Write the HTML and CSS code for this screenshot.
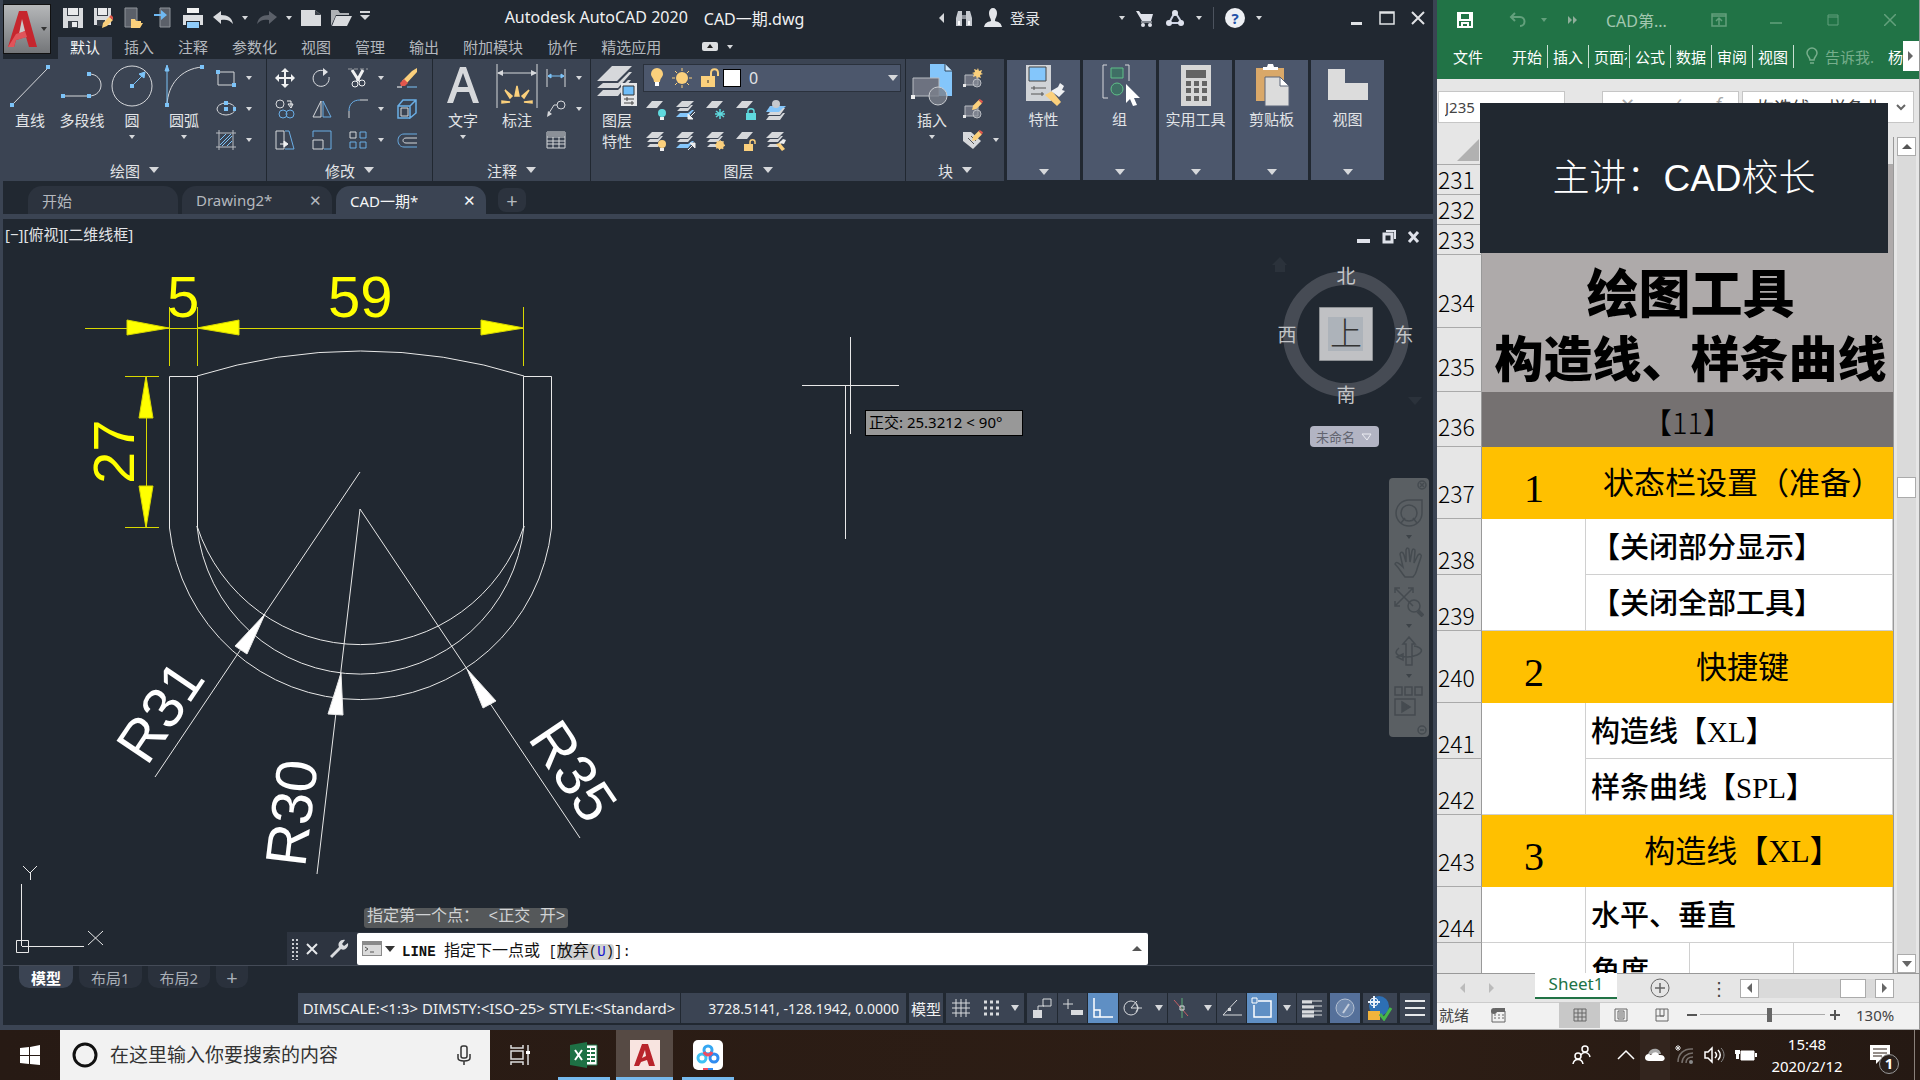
FILE: index.html
```html
<!DOCTYPE html>
<html lang="zh-CN">
<head>
    <meta charset="UTF-8">
    <meta name="viewport" content="width=device-width, initial-scale=1.0">
    <title>Autodesk AutoCAD 2020 CAD一期.dwg</title>
    <link rel="stylesheet" href="styles.css">
</head>
<body>
    <!-- shared icon parts -->
    <svg class="sprite" aria-hidden="true">
        <symbol id="sheet" viewBox="0 0 20 20"><path d="M6 1h11l-6 7H0z" fill="#d6d8db"/></symbol>
        <symbol id="stack" viewBox="0 0 20 20">
            <path d="M6 1h12l-6 6H0z" fill="#d6d8db"/>
            <path d="M1 11l3-3h8l3-3h2l-5 6zM1 16l3-3h8l3-3h2l-5 6z" fill="#d6d8db"/>
        </symbol>
        <symbol id="stack-blue" viewBox="0 0 20 20">
            <path d="M6 1h12l-6 6H0z" fill="#d6d8db"/>
            <path d="M1 11l3-3h8l3-3h2l-5 6z" fill="#d6d8db"/>
            <path d="M0 17l4-4h8l4-3h2l-6 7z" fill="#84c6fb"/>
        </symbol>
        <symbol id="block" viewBox="0 0 20 20">
            <path d="M2 7h13v10H2z" fill="#6d7280" stroke="#b9bcc2"/>
            <circle cx="14" cy="15" r="4" fill="#8b8f99" fill-opacity=".6" stroke="#b9bcc2"/>
            <path d="M0 16h3v3H0z" fill="#e8e8e8"/>
        </symbol>
        <symbol id="pencil" viewBox="0 0 10 10"><path d="M0 10l1-4 5-5 3 3-5 5z" fill="#fbd07c"/><path d="M6 1l1-1 3 2-1 2z" fill="#e2574c"/></symbol>
    </svg>

    <div class="desktop">
        <main class="cad">
            <header class="cad-head">
                <button class="app-button" aria-label="应用程序菜单">
                    <svg width="30" height="38" viewBox="0 0 30 38"><path d="M0 37L11 1h8l10 36h-8l-3-10-10 3-2 7z" fill="#c6262e"/><path d="M14 9l3 12-6 3z" fill="#c9c9c9"/><path d="M0 37l8-13 9-3 2 6-11 3-2 7z" fill="#e0545a"/></svg>
                    <span class="caret dark"></span>
                </button>
                <div class="cad-head-rows">
                    <div class="title-bar">
                        <div class="quick">
                            <button aria-label="保存"><svg width="20" height="22" viewBox="0 0 20 22"><path d="M0 1h20v20H0z" fill="#d9dbde"/><path d="M4 1h12v8H4zM5 14h10v7H5z" fill="#3a4049"/><path d="M5 1h10v7H5zM9 15h5v5H9z" fill="#e9eaec"/></svg></button>
                            <button aria-label="另存为"><svg width="20" height="22" viewBox="0 0 20 22"><path d="M1 1h17v17H1z" fill="#d9dbde"/><path d="M4 1h11v8H4zM4 13h8v6H4z" fill="#3a4049"/><path d="M5 1h9v7H5z" fill="#e9eaec"/><path d="M9 21l1-5 6-6 4 3-6 6z" fill="#fbd07c"/><path d="M16 10l2-2 3 3-1 2z" fill="#e2574c"/></svg></button>
                            <button aria-label="打开"><svg width="20" height="22" viewBox="0 0 20 22"><path d="M2 1h12v19H2z" fill="#5b6069" stroke="#90949b"/><path d="M8 20v-8h4l1 2h5v2h2l-3 5H8z" fill="#fbd07c"/></svg></button>
                            <button aria-label="保存到移动设备"><svg width="20" height="22" viewBox="0 0 20 22"><path d="M7 1h10v19H7z" fill="#5b6069" stroke="#90949b"/><path d="M1 7h7V3l6 5-6 5V9H1z" fill="#6fb9f2"/></svg></button>
                            <button aria-label="打印"><svg width="22" height="22" viewBox="0 0 22 22"><path d="M5 1h12v5H5z" fill="#f2f2f2"/><path d="M1 8h20v10h-3v-4H4v4H1z" fill="#dcdee1"/><path d="M5 15h12v6H5z" fill="#8fccfb"/></svg></button>
                            <button aria-label="放弃"><svg width="20" height="14" viewBox="0 0 20 14"><path d="M0 6l8-6v4c7 0 11 3 12 9-3-4-7-5-12-4v4z" fill="#d9dbde"/></svg></button>
                            <span class="caret"></span>
                            <button aria-label="重做"><svg width="20" height="14" viewBox="0 0 20 14"><path d="M20 6l-8-6v4C5 4 1 7 0 13c3-4 7-5 12-4v4z" fill="#5b6069"/></svg></button>
                            <span class="caret"></span>
                            <button aria-label="新建"><svg width="20" height="18" viewBox="0 0 20 18"><path d="M0 1h14l6 5v11H0z" fill="#d9dbde"/><path d="M14 1v5h6z" fill="#3a4049"/></svg></button>
                            <button aria-label="打开文件"><svg width="21" height="18" viewBox="0 0 21 18"><path d="M0 17V1h7l2 3h9v2H5z" fill="#aeb1b5"/><path d="M5 7h16l-5 10H1z" fill="#d9dbde"/></svg></button>
                            <span class="caret lined"></span>
                        </div>
                        <div class="app-title"><span>Autodesk AutoCAD 2020</span><span>CAD一期.dwg</span></div>
                        <div class="account">
                            <span class="caret left"></span>
                            <button aria-label="搜索"><svg width="18" height="18" viewBox="0 0 18 18"><path d="M1 17V9l2-7h4v15zM17 17V9l-2-7h-4v15z" fill="#c6cad0"/><path d="M7 6h4v4H7z" fill="#8b9098"/><path d="M3 12h2v4H3zM13 12h2v4h-2z" fill="#fff"/></svg></button>
                            <button class="login"><svg width="18" height="20" viewBox="0 0 18 20"><path d="M5 5a4 5 0 0 1 8 0c0 4-2 5-2 8 4 1 6 2 7 6H0c1-4 3-5 7-6 0-3-2-4-2-8z" fill="#e4e6ea"/></svg>登录</button>
                            <span class="caret login-caret"></span>
                            <button aria-label="购物车"><svg width="18" height="18" viewBox="0 0 18 18"><path d="M0 2h3l2 3h12l-2 7H6z" fill="#dfe2ea"/><path d="M5 13h11" stroke="#dfe2ea"/><circle cx="7" cy="16" r="2" fill="#dfe2ea"/><circle cx="14" cy="16" r="2" fill="#dfe2ea"/></svg></button>
                            <button aria-label="应用商店"><svg width="20" height="18" viewBox="0 0 20 18"><path d="M10 3L4 14h13z" fill="none" stroke="#cdd3e4" stroke-width="2"/><circle cx="10" cy="4" r="3" fill="#dfe3ee"/><circle cx="4" cy="14" r="3" fill="#dfe3ee"/><circle cx="16" cy="14" r="3" fill="#dfe3ee"/></svg></button>
                            <span class="caret"></span>
                            <span class="divider"></span>
                            <button class="help" aria-label="帮助">?</button>
                            <span class="caret"></span>
                        </div>
                        <div class="win-controls">
                            <button aria-label="最小化"><svg width="16" height="16" viewBox="0 0 16 16"><path d="M3 12h11v3H3z" fill="#e0e2e5"/></svg></button>
                            <button aria-label="最大化"><svg width="16" height="16" viewBox="0 0 16 16"><path d="M1 2h14v12H1zM1 3h14" fill="none" stroke="#e0e2e5" stroke-width="1.5"/></svg></button>
                            <button aria-label="关闭"><svg width="16" height="16" viewBox="0 0 16 16"><path d="M2 2l12 12M14 2L2 14" stroke="#e0e2e5" stroke-width="2"/></svg></button>
                        </div>
                    </div>
                    <nav class="ribbon-tabs">
                        <button class="active">默认</button><button>插入</button><button>注释</button><button>参数化</button><button>视图</button><button>管理</button><button>输出</button><button>附加模块</button><button>协作</button><button>精选应用</button>
                        <button class="ribbon-toggle" aria-label="最小化功能区"><svg width="18" height="11" viewBox="0 0 18 11"><rect x="1" y="1" width="16" height="9" rx="2" fill="#dcdee1"/><path d="M9 3l3 4H6z" fill="#222"/></svg><span class="caret"></span></button>
                    </nav>
                </div>
            </header>

            <section class="ribbon">
                <div class="panel draw">
                    <div class="panel-body">
                        <button class="big"><svg width="42" height="44" viewBox="0 0 42 44"><path d="M3 41L39 4" stroke="#d6d8db"/><path d="M1 39h4v4H1zM37 1h4v4h-4z" fill="#7cc3f8"/></svg>直线</button>
                        <button class="big"><svg width="44" height="44" viewBox="0 0 44 44"><path d="M3 32h26M29 10c16 0 16 22 0 22" fill="none" stroke="#d6d8db"/><path d="M1 30h4v4H1zM27 30h4v4h-4zM27 8h4v4h-4z" fill="#7cc3f8"/></svg>多段线</button>
                        <button class="big"><svg width="42" height="44" viewBox="0 0 42 44"><circle cx="21" cy="22" r="20" fill="none" stroke="#d6d8db"/><path d="M21 22l12-12M34 8l-1 6-5-4z" stroke="#7cc3f8" fill="#7cc3f8"/><path d="M19 20h4v4h-4z" fill="#7cc3f8"/></svg>圆<span class="caret"></span></button>
                        <button class="big"><svg width="42" height="44" viewBox="0 0 42 44"><path d="M4 41C5 20 18 5 39 3" fill="none" stroke="#d6d8db"/><path d="M4 41V6M4 1l2 6H2z" stroke="#7cc3f8" fill="#7cc3f8"/><path d="M2 39h4v4H2zM37 1h4v4h-4z" fill="#7cc3f8"/></svg>圆弧<span class="caret"></span></button>
                        <div class="tools two">
                            <button aria-label="矩形"><svg width="20" height="20" viewBox="0 0 20 20"><path d="M2 4h16v13H2z" fill="none" stroke="#d6d8db"/><path d="M0 2h4v4H0zM16 15h4v4h-4z" fill="#7cc3f8"/></svg></button><span class="caret"></span>
                            <button aria-label="椭圆"><svg width="20" height="20" viewBox="0 0 20 20"><ellipse cx="10" cy="10" rx="9" ry="6" fill="none" stroke="#d6d8db"/><path d="M8 2h4v4H8zM8 8h4v4H8zM17 8h3v4h-3z" fill="#7cc3f8"/></svg></button><span class="caret"></span>
                            <button aria-label="图案填充"><svg width="20" height="20" viewBox="0 0 20 20"><path d="M3 0v20M17 0v20M0 3h20M0 17h20" stroke="#b9bcc2"/><path d="M4 10l6-6M4 15L15 4M6 16l10-10M11 16l5-5" stroke="#7cc3f8"/></svg></button><span class="caret"></span>
                        </div>
                    </div>
                    <h2>绘图<span class="caret wide"></span></h2>
                </div>
                <div class="panel modify">
                    <div class="panel-body">
                        <div class="tools five">
                            <button aria-label="移动"><svg width="20" height="20" viewBox="0 0 20 20"><path d="M10 0l4 4h-3v5h5V6l4 4-4 4v-3h-5v5h3l-4 4-4-4h3v-5H4v3l-4-4 4-4v3h5V4H6z" fill="#f0f1f2"/></svg></button>
                            <button aria-label="旋转"><svg width="20" height="20" viewBox="0 0 20 20"><path d="M14 4a8 8 0 1 0 3 5" fill="none" stroke="#e0e2e5"/><path d="M11 0l5 4-5 4z" fill="#e0e2e5"/></svg></button>
                            <button aria-label="修剪"><svg width="20" height="20" viewBox="0 0 20 20"><path d="M0 1h20" stroke="#9a9da3" stroke-dasharray="4 2"/><path d="M4 2l7 11M15 2l-6 11" stroke="#f0f1f2" stroke-width="3"/><circle cx="7" cy="16" r="3" fill="none" stroke="#f0f1f2"/><circle cx="14" cy="15" r="3" fill="none" stroke="#f0f1f2"/></svg></button>
                            <span class="caret"></span>
                            <button aria-label="删除"><svg width="20" height="20" viewBox="0 0 20 20"><path d="M20 0v4L9 16l-4-3L15 3z" fill="#fbd07c"/><path d="M7 11l4 4-3 3H4l-1-3z" fill="#e2574c"/><path d="M0 19h5" stroke="#fff"/><path d="M10 19h10" stroke="#7cc3f8"/></svg></button>
                            <button aria-label="复制"><svg width="20" height="20" viewBox="0 0 20 20"><circle cx="5" cy="5" r="4" fill="none" stroke="#d6d8db"/><path d="M12 2h4v5M13 5l3 4 2-4z" stroke="#f0f1f2" fill="none"/><circle cx="8" cy="15" r="4" fill="none" stroke="#6aaee6"/><circle cx="15" cy="15" r="4" fill="none" stroke="#6aaee6"/></svg></button>
                            <button aria-label="镜像"><svg width="20" height="20" viewBox="0 0 20 20"><path d="M9 2v16H1z" fill="none" stroke="#d6d8db"/><path d="M11 2v16h8z" fill="none" stroke="#6aaee6"/></svg></button>
                            <button aria-label="圆角"><svg width="20" height="20" viewBox="0 0 20 20"><path d="M1 19v-7" stroke="#d6d8db"/><path d="M1 12C1 5 5 1 12 1" fill="none" stroke="#6aaee6"/><path d="M12 1h8" stroke="#d6d8db"/></svg></button>
                            <span class="caret"></span>
                            <button aria-label="分解"><svg width="20" height="20" viewBox="0 0 20 20"><path d="M1 7h12v12H1zM1 7l5-6h13v13l-6 5V7l6-6" fill="none" stroke="#6aaee6" stroke-width="1.5"/><path d="M4 9h7v8H4z" fill="none" stroke="#d6d8db"/></svg></button>
                            <button aria-label="拉伸"><svg width="20" height="20" viewBox="0 0 20 20"><path d="M1 1h8v18H1z" fill="none" stroke="#d6d8db"/><path d="M10 1h4l5 18h-9" fill="none" stroke="#6aaee6"/><path d="M5 14h5M9 11l4 3-4 3z" stroke="#f0f1f2" fill="#f0f1f2"/></svg></button>
                            <button aria-label="缩放"><svg width="20" height="20" viewBox="0 0 20 20"><path d="M1 7V1h18v18h-7" fill="none" stroke="#6aaee6"/><path d="M1 10h10v9H1z" fill="none" stroke="#d6d8db"/></svg></button>
                            <button aria-label="阵列"><svg width="20" height="20" viewBox="0 0 20 20"><path d="M2 2h6v6H2z" fill="none" stroke="#d6d8db"/><path d="M12 2h6v6h-6zM2 12h6v6H2zM12 12h6v6h-6z" fill="none" stroke="#6aaee6"/></svg></button>
                            <span class="caret"></span>
                            <button aria-label="偏移"><svg width="20" height="20" viewBox="0 0 20 20"><path d="M20 4H7c-8 0-8 13 0 13h13" fill="none" stroke="#6aaee6"/><path d="M20 8H9c-4 0-4 5 0 5h11" fill="none" stroke="#d6d8db"/></svg></button>
                        </div>
                    </div>
                    <h2>修改<span class="caret wide"></span></h2>
                </div>
                <div class="panel annotate">
                    <div class="panel-body">
                        <button class="big"><svg width="34" height="44" viewBox="0 0 34 44"><path d="M14 3h6l13 36h-6l-4-11H11L7 39H1zM17 9l-5 14h10z" fill="#d6d8db"/></svg>文字<span class="caret"></span></button>
                        <button class="big"><svg width="42" height="44" viewBox="0 0 42 44"><path d="M1 0v44M41 0v44M2 9h38" stroke="#d6d8db"/><path d="M1 9l6-3v6zM41 9l-6-3v6z" fill="#d6d8db"/><path d="M19 32l2-10 2 10zM14 34l-5-8 7 6zM28 34l5-8-7 6zM14 38l-8-1v2zM28 38l8-1v2z" fill="#fbd07c" stroke="#fbd07c" stroke-width="1.5"/></svg>标注</button>
                        <div class="tools two">
                            <button aria-label="线性"><svg width="20" height="20" viewBox="0 0 20 20"><path d="M1 1v18M19 1v18" stroke="#d6d8db"/><path d="M2 8h16M2 8l3-2v4zM18 8l-3-2v4z" stroke="#7cc3f8" fill="#7cc3f8"/></svg></button><span class="caret"></span>
                            <button aria-label="引线"><svg width="20" height="20" viewBox="0 0 20 20"><circle cx="15" cy="6" r="4" fill="none" stroke="#d6d8db"/><path d="M11 6H8L3 14" fill="none" stroke="#d6d8db"/><path d="M1 18l1-6 4 3z" fill="#d6d8db"/></svg></button><span class="caret"></span>
                            <button aria-label="表格"><svg width="20" height="20" viewBox="0 0 20 20"><path d="M1 2h18v16H1zM1 7h18M1 11h18M1 14h18M7 7v11M13 7v11" fill="none" stroke="#d6d8db"/><path d="M1 2h18v4H1z" fill="#8b9098"/></svg></button>
                        </div>
                    </div>
                    <h2>注释<span class="caret wide"></span></h2>
                </div>
                <div class="panel layers">
                    <div class="panel-body">
                        <button class="big"><svg width="42" height="44" viewBox="0 0 42 44"><path d="M16 2h20L21 17H1zM1 24l6-5h15l11-11h3L22 24zM1 32l6-6h15l10-10h3L22 32z" fill="#d6d8db"/><path d="M25 19h16v23H25z" fill="#e6e7e9"/><path d="M27 22h11v9H27z" fill="#6fbdf8" stroke="#333"/><path d="M28 35h10M28 39h10M31 33v4M36 37v4" stroke="#444"/></svg>图层<br>特性</button>
                        <div class="layer-side">
                            <div class="layer-combo">
                                <svg width="14" height="20" viewBox="0 0 14 20"><path d="M1 6a6 6 0 0 1 12 0c0 3-3 4-3 8H4c0-4-3-5-3-8z" fill="#fbd07c"/><path d="M5 14h4v4H5z" fill="#fff"/></svg>
                                <svg width="20" height="20" viewBox="0 0 20 20"><circle cx="10" cy="10" r="6" fill="#fbd07c"/><path d="M10 0v3M10 17v3M0 10h3M17 10h3M3 3l2 2M15 15l2 2M3 17l2-2M15 5l2-2" stroke="#fbd07c"/></svg>
                                <svg width="20" height="20" viewBox="0 0 20 20"><path d="M1 8h14v11H1z" fill="#fbd07c"/><path d="M11 8V5c0-5 7-5 7 0v3" fill="none" stroke="#fbd07c" stroke-width="2"/><path d="M8 12v3" stroke="#333"/></svg>
                                <span class="swatch"></span>
                                <select aria-label="图层"><option>0</option></select>
                                <span class="caret wide"></span>
                            </div>
                            <div class="tools layer-tools">
                                <button aria-label="关"><svg width="20" height="20" viewBox="0 0 20 20"><use href="#sheet"/><circle cx="16" cy="13" r="4" fill="#5fd9de"/><path d="M14 17h4v3h-4z" fill="#eee"/></svg></button>
                                <button aria-label="隔离"><svg width="20" height="20" viewBox="0 0 20 20"><use href="#stack-blue"/><path d="M19 12l-6 6M12 19v-5l5 5z" stroke="#eee" fill="#eee"/></svg></button>
                                <button aria-label="冻结"><svg width="20" height="20" viewBox="0 0 20 20"><use href="#sheet"/><path d="M14 9v10M10 11l8 6M18 11l-8 6M9 14h10" stroke="#5fd9de" stroke-width="1.5"/></svg></button>
                                <button aria-label="锁定"><svg width="20" height="20" viewBox="0 0 20 20"><use href="#sheet"/><path d="M10 13h10v7H10z" fill="#5fd9de"/><path d="M12 13v-2c0-3 6-3 6 0v2" fill="none" stroke="#5fd9de" stroke-width="1.5"/></svg></button>
                                <button aria-label="置为当前"><svg width="20" height="20" viewBox="0 0 20 20"><path d="M4 6h16l-6 6H0z" fill="#84c6fb"/><path d="M1 15l3-3h9l4-4h2l-5 7zM0 20l3-4h11l3-3h2l-5 7z" fill="#d6d8db"/><circle cx="10" cy="4" r="4" fill="#c6c9ce"/></svg></button>
                                <button aria-label="打开所有图层"><svg width="20" height="20" viewBox="0 0 20 20"><use href="#stack"/><circle cx="16" cy="13" r="4" fill="#fbd07c"/><path d="M14 17h4v3h-4z" fill="#eee"/></svg></button>
                                <button aria-label="取消隔离"><svg width="20" height="20" viewBox="0 0 20 20"><use href="#stack-blue"/><path d="M12 19l6-6M19 12v5l-5-5z" stroke="#eee" fill="#eee"/></svg></button>
                                <button aria-label="解冻"><svg width="20" height="20" viewBox="0 0 20 20"><use href="#stack"/><circle cx="14" cy="14" r="4" fill="#fbd07c" stroke="#fbd07c" stroke-width="2" stroke-dasharray="1 2"/></svg></button>
                                <button aria-label="解锁"><svg width="20" height="20" viewBox="0 0 20 20"><use href="#sheet"/><path d="M8 13h9v7H8z" fill="#fbd07c"/><path d="M14 13v-2c0-3 5-3 5 0v2" fill="none" stroke="#fbd07c" stroke-width="1.5"/></svg></button>
                                <button aria-label="匹配图层"><svg width="20" height="20" viewBox="0 0 20 20"><use href="#stack"/><path d="M10 13l4-1 5 6-3 2z" fill="#fbd07c"/><path d="M13 12l4-4 3 1-2 4z" fill="#eee"/></svg></button>
                            </div>
                        </div>
                    </div>
                    <h2>图层<span class="caret wide"></span></h2>
                </div>
                <div class="panel blocks">
                    <div class="panel-body">
                        <button class="big"><svg width="42" height="44" viewBox="0 0 42 44"><path d="M19 0h15l7 7v25H19z" fill="#84c6fb"/><path d="M34 0v7h7" fill="#cfe8fb" stroke="#31465c"/><path d="M2 14h26v18H2z" fill="#6d7280" stroke="#b9bcc2"/><circle cx="27" cy="32" r="9" fill="#7a7f8b" fill-opacity=".8" stroke="#c9ccd1"/><path d="M0 31h4v4H0z" fill="#eee"/></svg>插入<span class="caret"></span></button>
                        <div class="tools two">
                            <button aria-label="创建"><svg width="20" height="20" viewBox="0 0 20 20"><use href="#block"/><path d="M15 0l1 3 3-1-1 3 2 1-3 1 1 3-3-1-1 2-1-3-3 1 1-3-2-1 3-1-1-3 3 1z" fill="#fbd07c"/></svg></button><span></span>
                            <button aria-label="编辑"><svg width="20" height="20" viewBox="0 0 20 20"><use href="#block"/><use href="#pencil" x="9" y="0" width="11" height="11"/></svg></button><span></span>
                            <button aria-label="编辑属性"><svg width="20" height="20" viewBox="0 0 20 20"><path d="M0 2h8l10 9-8 8L0 11z" fill="#d6d8db"/><path d="M5 8l6 6M8 6l5 5" stroke="#555"/><use href="#pencil" x="9" y="0" width="11" height="11"/></svg></button><span class="caret"></span>
                        </div>
                    </div>
                    <h2>块<span class="caret wide"></span></h2>
                </div>
                <button class="folded"><svg width="42" height="44" viewBox="0 0 42 44"><path d="M3 2h25v36H3z" fill="#d0d3d7"/><path d="M6 4h17v14H6z" fill="#84c6fb" stroke="#444"/><path d="M8 25h15M8 31h13M11 23v4M19 29v4" stroke="#555"/><path d="M22 32l7-4 9 11-4 4z" fill="#fbd07c"/><path d="M28 28l7-4 2-4 4 3-2 4 3 1-6 6z" fill="#eef0f2"/></svg>特性<span class="caret wide"></span></button>
                <button class="folded"><svg width="42" height="44" viewBox="0 0 42 44"><path d="M8 2H4v33h5M26 2h4v16" fill="none" stroke="#d6d8db"/><path d="M12 5h12v10H12z" fill="#3f6f65" stroke="#5fc088"/><circle cx="18" cy="26" r="6" fill="#3f6f65" stroke="#5fc088"/><path d="M27 21v19l4-4 3 7 4-1-3-7h6z" fill="#fff"/></svg>组<span class="caret wide"></span></button>
                <button class="folded"><svg width="42" height="44" viewBox="0 0 42 44"><path d="M6 2h30v41H6z" fill="#d6d6d6"/><path d="M11 7h20v8H11zM11 18h5v5h-5zM19 18h5v5h-5zM27 18h5v5h-5zM11 25h5v5h-5zM19 25h5v5h-5zM27 25h5v5h-5zM11 33h5v5h-5zM19 33h5v5h-5zM27 33h5v5h-5z" fill="#636363"/></svg>实用工具<span class="caret wide"></span></button>
                <button class="folded"><svg width="42" height="44" viewBox="0 0 42 44"><path d="M5 5h28v33H5z" fill="#d9a869"/><path d="M12 7V4h4l1-3h5l1 3h4v3z" fill="#fff"/><path d="M14 14h15l9 9v20H14z" fill="#dcdcdc" stroke="#5a6478"/><path d="M29 14l9 9h-9z" fill="#fff" stroke="#5a6478"/></svg>剪贴板<span class="caret wide"></span></button>
                <button class="folded"><svg width="42" height="44" viewBox="0 0 42 44"><path d="M1 6h17v14h23v17H1z" fill="#dcdcdc"/></svg>视图<span class="caret wide"></span></button>
            </section>

            <nav class="file-tabs">
                <button class="file-tab">开始</button>
                <button class="file-tab">Drawing2*<span class="x">✕</span></button>
                <button class="file-tab active">CAD一期*<span class="x">✕</span></button>
                <button class="new-tab" aria-label="新图形">+</button>
            </nav>

            <section class="canvas">
                <!-- model space, drawn in screen coordinates -->
                <svg class="drawing" width="1430" height="746" viewBox="3 219 1430 746">
                    <g class="dim">
                        <path d="M85 328.500H524M169.500 307v59M197.500 307v59M523.500 307v59M125 376.500h34M125 527.500h34M146.500 377v150"/>
                        <path class="solid" d="M169 328l-42-8v15zM197 328l42-8v15zM524 328l-43-8v15zM146 376l-7 42h14zM146 528l-7-42h14z"/>
                        <text x="167" y="317">5</text>
                        <text x="328" y="317">59</text>
                        <text transform="translate(134 484) rotate(-90)">27</text>
                    </g>
                    <g class="lines">
                        <path d="M197.500 376.500h-28V528A192.100 192.100 0 0 0 551.500 528V376.500h-28M197.500 376.500V527M523.500 376.500V527M197 376A547 547 0 0 1 524 376"/>
                        <path d="M197 526A164.300 164.300 0 0 0 524 526M197 526A172 172 0 0 0 524 526"/>
                        <path d="M360 472L155 777M360 509L317 874M360 509L580 838"/>
                        <path class="solid" d="M265 614l-30 32 12 8zM341 673l-13 41 15 1zM467 669l16 39 13-7z"/>
                        <text transform="translate(147 767) rotate(-56)">R31</text>
                        <text transform="translate(305 868) rotate(-83)">R30</text>
                        <text transform="translate(527 738) rotate(56)">R35</text>
                        <path d="M850.500 337v97M802 385.500h97M845.500 385v154"/>
                        <path d="M16.500 940.500h12v12h-12zM22 946.500h62M21.500 884v62M23 866l7 7 7-7M30.500 873v7M88 931l15 14M103 931l-15 14"/>
                    </g>
                    <g class="compass">
                        <circle cx="1346" cy="334" r="56"/>
                        <path class="cube" d="M1319.500 307.500h53v53h-53z"/>
                        <path class="cube-face" d="M1328 317h35v34h-35z"/>
                        <text x="1346" y="283">北</text><text x="1346" y="402">南</text>
                        <text x="1287" y="342">西</text><text x="1404" y="342">东</text>
                        <text class="top" x="1346" y="345">上</text>
                        <path class="faint" d="M1272 265l8-8 7 8h-2v7h-10v-7zM1408 397h14l-7 8z"/>
                    </g>
                </svg>
                <div class="view-label"><button>[−]</button><button>[俯视]</button><button>[二维线框]</button></div>
                <div class="doc-controls">
                    <button aria-label="最小化"><svg width="14" height="14" viewBox="0 0 14 14"><path d="M0 9h13v4H0z" fill="#dfe2ea"/></svg></button>
                    <button aria-label="还原"><svg width="14" height="14" viewBox="0 0 14 14"><path d="M4 1h9v8" fill="none" stroke="#dfe2ea" stroke-width="2"/><path d="M2 4h8v8H2z" fill="none" stroke="#dfe2ea" stroke-width="3"/></svg></button>
                    <button aria-label="关闭"><svg width="14" height="14" viewBox="0 0 14 14"><path d="M2 2l9 10M11 2L2 12" stroke="#dfe2ea" stroke-width="3"/></svg></button>
                </div>
                <div class="tip">正交: 25.3212 &lt; 90°</div>
                <button class="ucs">未命名<svg width="12" height="8" viewBox="0 0 12 8"><path d="M1 1h9L6 7z" fill="none" stroke="#ecedf3"/></svg></button>
                <div class="nav-bar">
                    <svg class="nav-x" width="10" height="10" viewBox="0 0 10 10"><circle cx="5" cy="5" r="4"/><path d="M3 3l4 4M7 3L3 7"/></svg>
                    <button aria-label="导航控制盘"><svg width="30" height="30" viewBox="0 0 30 30"><path d="M28 2v13A13 13 0 1 1 15 2z"/><circle cx="15" cy="15" r="8"/><path d="M7 25l4-5M23 25l-4-5"/></svg></button>
                    <span class="caret"></span>
                    <button aria-label="平移"><svg width="30" height="32" viewBox="0 0 30 32"><path d="M11 30C7 25 5 21 1 17c1-3 4-1 8 3L6 7c1-3 3-2 4 1l2 7V3c1-3 3-2 3 0l1 12 2-11c1-3 3-2 3 0l-1 12 4-8c2-2 4 0 3 2l-4 12c-1 4-1 5-4 8z"/></svg></button>
                    <button aria-label="缩放范围"><svg width="30" height="30" viewBox="0 0 30 30"><path d="M1 1l18 18M19 1L1 19M1 6V1h5M14 1h5v5M1 14v5h5"/><circle cx="20" cy="19" r="6"/><path d="M24 24l5 5" stroke-width="4"/></svg></button>
                    <span class="caret"></span>
                    <button aria-label="动态观察"><svg width="30" height="30" viewBox="0 0 30 30"><path d="M12 29V8H9l6-7 6 7h-3v21zM5 12c-10 8 8 11 18 7 8-4 4-8-3-9M3 21l6-3v6z"/></svg></button>
                    <span class="caret"></span>
                    <button aria-label="ShowMotion"><svg width="30" height="32" viewBox="0 0 30 32"><path d="M1 2h7v8H1zM11 2h7v8h-7zM21 2h7v8h-7zM1 14h20v16H1z"/><path d="M8 17l8 5-8 5z" fill="#454b50"/></svg></button>
                    <svg class="nav-x end" width="10" height="10" viewBox="0 0 10 10"><circle cx="5" cy="5" r="4"/><path d="M3 5h4"/></svg>
                </div>
                <div class="history">指定第一个点： &lt;正交 开&gt;</div>
                <div class="command">
                    <span class="grip"></span>
                    <button aria-label="关闭命令行"><svg width="14" height="14" viewBox="0 0 14 14"><path d="M2 2l10 10M12 2L2 12" stroke="#e6e8eb" stroke-width="2"/></svg></button>
                    <button aria-label="自定义"><svg width="20" height="20" viewBox="0 0 20 20"><path d="M1 17L10 8c-2-4 2-8 6-7l-3 4 2 2 4-3c1 5-4 8-7 6l-9 9z" fill="#d9dbde"/></svg></button>
                    <div class="command-line">
                        <svg width="20" height="16" viewBox="0 0 20 16"><path d="M0 0h20v15H0z" fill="#8a8a8a"/><path d="M1 4h18v10H1z" fill="#dadada"/><path d="M3 6l3 2-3 2M8 11h4" fill="none" stroke="#555"/></svg>
                        <span class="caret wide dark"></span>
                        <label for="cmd"><b>LINE</b> <span>指定下一点或</span> [<kbd><span>放弃</span>(<i>U</i>)</kbd>]:</label>
                        <input id="cmd" type="text">
                        <span class="caret up dark"></span>
                    </div>
                </div>
            </section>

            <footer class="cad-foot">
                <nav class="layout-tabs"><button class="active">模型</button><button>布局1</button><button>布局2</button><button class="plus" aria-label="新建布局">+</button></nav>
                <div class="status">
                    <span class="cell vars">DIMSCALE:&lt;1:3&gt; DIMSTY:&lt;ISO-25&gt; STYLE:&lt;Standard&gt;</span>
                    <span class="cell coords">3728.5141, -128.1942, 0.0000</span>
                    <button class="cell model">模型</button>
                    <div class="cell">
                        <button aria-label="栅格"><svg width="20" height="20" viewBox="0 0 20 20"><path d="M5 1v18M10 1v18M15 1v18M1 5h18M1 10h18M1 15h18" stroke="#d9dbde"/></svg></button>
                        <button aria-label="捕捉"><svg width="20" height="20" viewBox="0 0 20 20"><path d="M3 4h16M3 10h16M3 16h16" stroke="#d9dbde" stroke-width="3" stroke-dasharray="3 3"/></svg></button>
                        <span class="caret tall"></span>
                    </div>
                    <button class="cell" aria-label="推断约束"><svg width="20" height="20" viewBox="0 0 20 20"><path d="M1 12h9v8H1z" fill="#d9dbde"/><path d="M6 12V8h6M11 1h8v7h-8z" fill="none" stroke="#d9dbde"/></svg></button>
                    <button class="cell tight" aria-label="动态输入"><svg width="20" height="20" viewBox="0 0 20 20"><path d="M5 1v10M0 6h10" stroke="#d9dbde"/><path d="M8 12h12v5H8z" fill="#d9dbde"/></svg></button>
                    <button class="cell tight on" aria-label="正交"><svg width="22" height="22" viewBox="0 0 22 22"><path d="M2 1v19h19M2 13h6v7" fill="none" stroke="#fff" stroke-width="1.5"/></svg></button>
                    <div class="cell tight pair">
                        <button aria-label="极轴追踪"><svg width="20" height="20" viewBox="0 0 20 20"><circle cx="8" cy="10" r="7" fill="none" stroke="#d9dbde"/><path d="M19 10H8l6-7M13 6l2 4-2 4" fill="none" stroke="#d9dbde"/></svg></button><span class="caret tall"></span>
                    </div>
                    <div class="cell tight pair">
                        <button aria-label="等轴测草图"><svg width="20" height="20" viewBox="0 0 20 20"><path d="M2 2l14 16" stroke="#c65f63"/><path d="M10 0v20" stroke="#5fae78"/><path d="M8 8h4v4H8z" fill="none" stroke="#d9dbde"/></svg></button><span class="caret tall"></span>
                    </div>
                    <button class="cell tight" aria-label="对象捕捉追踪"><svg width="20" height="20" viewBox="0 0 20 20"><path d="M15 2L1 17h19" fill="none" stroke="#d9dbde"/><path d="M6 10h3v3H6z" fill="#d9dbde"/></svg></button>
                    <button class="cell tight on" aria-label="对象捕捉"><svg width="22" height="22" viewBox="0 0 22 22"><path d="M7 4h13v16H3V8" fill="none" stroke="#fff" stroke-width="1.5"/><path d="M1 1h5v5H1z" fill="none" stroke="#fff"/></svg></button>
                    <span class="cell tight"><span class="caret tall"></span></span>
                    <button class="cell tight" aria-label="线宽"><svg width="22" height="20" viewBox="0 0 22 20"><path d="M1 3h20M1 8h20M1 13h20M1 17h20" stroke="#d9dbde"/><path d="M1 4h10M1 9h12M1 14h12M1 18h12" stroke="#d9dbde" stroke-width="3"/></svg></button>
                    <button class="cell dim-on" aria-label="透明度"><svg width="22" height="22" viewBox="0 0 22 22"><circle cx="11" cy="11" r="9" fill="#7089ae" stroke="#b4c0d2"/><path d="M9 16l6-9" stroke="#c4cedc" stroke-width="2"/></svg></button>
                    <button class="cell gpu" aria-label="硬件加速"><svg width="26" height="26" viewBox="0 0 26 26"><circle cx="12" cy="11" r="10" fill="#2d6fb4"/><path d="M1 16h12v9H1z" fill="#f2b43c"/><path d="M7 1v12M1 7h12" stroke="#e9f1fa" stroke-width="2"/><circle cx="7" cy="7" r="4" fill="none" stroke="#e9f1fa"/><path d="M13 19l4 5 7-11" fill="none" stroke="#45b649" stroke-width="3"/></svg></button>
                    <button class="cell" aria-label="自定义"><svg width="20" height="22" viewBox="0 0 20 22"><path d="M0 4h20M0 11h20M0 18h20" stroke="#e6e8eb" stroke-width="2"/></svg></button>
                </div>
            </footer>
        </main>

        <aside class="excel">
            <header class="xl-head">
                <div class="xl-title">
                    <button aria-label="保存"><svg width="16" height="16" viewBox="0 0 16 16"><path d="M1 1h14v14H1zM3 2v6h10V2M5 15v-4h6v4" fill="none" stroke="#fff" stroke-width="2"/></svg></button>
                    <button aria-label="撤消"><svg width="18" height="16" viewBox="0 0 18 16"><path d="M6 1L2 5l4 4M2 5h9c6 0 6 9 0 9" fill="none" stroke="#63a07c" stroke-width="2"/></svg></button>
                    <span class="caret faded"></span>
                    <svg width="9" height="8" viewBox="0 0 9 8"><path d="M0 0l4 4-4 4zM5 0l4 4-4 4z" fill="#8fae9a"/></svg>
                    <span class="xl-name">CAD第...</span>
                    <button aria-label="功能区显示选项"><svg width="16" height="14" viewBox="0 0 16 14"><path d="M1 1h14v12H1zM1 3h14M8 12V5M5 8l3-3 3 3" fill="none" stroke="#63a07c" stroke-width="1.5"/></svg></button>
                    <button aria-label="最小化"><svg width="12" height="12" viewBox="0 0 12 12"><path d="M0 9h12" stroke="#63a07c" stroke-width="1.5"/></svg></button>
                    <button aria-label="最大化"><svg width="12" height="12" viewBox="0 0 12 12"><path d="M1 1h10v10H1zM1 3h10" fill="none" stroke="#63a07c"/></svg></button>
                    <button aria-label="关闭"><svg width="12" height="12" viewBox="0 0 12 12"><path d="M0 0l12 12M12 0L0 12" stroke="#63a07c" stroke-width="1.5"/></svg></button>
                </div>
                <nav class="xl-tabs">
                    <button class="file">文件</button>
                    <button>开始</button><button>插入</button><button><span>页面布局</span></button><button>公式</button><button>数据</button><button>审阅</button><button>视图</button>
                    <button class="tell"><svg width="12" height="18" viewBox="0 0 12 18"><path d="M4 13c0-3-3-4-3-7a5 5 0 0 1 10 0c0 3-3 4-3 7zM4 16h4" fill="none" stroke="#77ae8c" stroke-width="1.5"/></svg>告诉我.</button>
                    <button class="user">杨</button>
                    <button class="scroll-right" aria-label="向右滚动"><span class="caret right"></span></button>
                </nav>
            </header>
            <div class="formula-bar">
                <input class="name-box" type="text" aria-label="名称框" value="J235">
                <div class="fx"><span>✕</span><span>✓</span><em>f</em></div>
                <input class="formula" type="text" aria-label="编辑栏" value="构造线、样条曲">
                <svg width="10" height="6" viewBox="0 0 10 6"><path d="M1 1l4 4 4-4" fill="none" stroke="#666" stroke-width="2"/></svg>
            </div>
            <div class="workbook">
                <div class="sheet">
                    <table>
                        <colgroup><col class="c-head"><col class="c-a"><col class="c-a"><col class="c-a"><col></colgroup>
                        <thead><tr><th><span class="corner"></span></th><th colspan="4"></th></tr></thead>
                        <tbody>
                            <tr class="short"><th>231</th><td class="grey" colspan="4" rowspan="3"></td></tr>
                            <tr class="short"><th>232</th></tr>
                            <tr class="short"><th>233</th></tr>
                            <tr class="tall"><th>234</th><td class="grey head" colspan="4">绘图工具</td></tr>
                            <tr class="mid"><th>235</th><td class="grey sub" colspan="4">构造线、样条曲线</td></tr>
                            <tr class="row dark-row"><th>236</th><td class="dark" colspan="4">【11】</td></tr>
                            <tr class="group"><th>237</th><td class="num">1</td><td colspan="3">状态栏设置（准备）</td></tr>
                            <tr class="row"><th>238</th><td rowspan="2"></td><td colspan="3">【关闭部分显示】</td></tr>
                            <tr class="row"><th>239</th><td colspan="3">【关闭全部工具】</td></tr>
                            <tr class="group"><th>240</th><td class="num">2</td><td colspan="3">快捷键</td></tr>
                            <tr class="row"><th>241</th><td rowspan="2"></td><td colspan="3">构造线【XL】</td></tr>
                            <tr class="row"><th>242</th><td colspan="3">样条曲线【SPL】</td></tr>
                            <tr class="group"><th>243</th><td class="num">3</td><td colspan="3">构造线【XL】</td></tr>
                            <tr class="row"><th>244</th><td></td><td colspan="3">水平、垂直</td></tr>
                            <tr class="row"><th></th><td></td><td>角度</td><td></td><td></td></tr>
                        </tbody>
                    </table>
                </div>
                <div class="v-scroll"><button aria-label="向上"><span class="caret up grey-c"></span></button><span class="thumb"></span><button aria-label="向下"><span class="caret wide grey-c"></span></button></div>
            </div>
            <div class="sheet-tabs">
                <span class="caret left pale"></span><span class="caret right pale"></span>
                <button class="sheet-tab">Sheet1</button>
                <button class="add" aria-label="新工作表"><svg width="20" height="20" viewBox="0 0 20 20"><circle cx="10" cy="10" r="9" fill="none" stroke="#666"/><path d="M10 5v10M5 10h10" stroke="#666" stroke-width="1.5"/></svg></button>
                <span class="dots">⋮</span>
                <div class="h-scroll"><button aria-label="向左"><span class="caret left grey-c"></span></button><span class="thumb"></span><button aria-label="向右"><span class="caret right grey-c"></span></button></div>
            </div>
            <footer class="xl-status">
                <span>就绪</span>
                <svg class="macro" width="16" height="16" viewBox="0 0 16 16"><path d="M2 4h13v11H2z" fill="none" stroke="#666"/><path d="M5 1h10v4H5z" fill="#666"/><circle cx="4" cy="4" r="3" fill="#666"/><path d="M4 8h10M4 11h10" stroke="#666" stroke-dasharray="2 2"/></svg>
                <button class="active" aria-label="普通"><svg width="14" height="14" viewBox="0 0 14 14"><path d="M1 1h12v12H1zM5 1v12M9 1v12M1 5h12M1 9h12" fill="none" stroke="#666"/></svg></button>
                <button aria-label="页面布局"><svg width="14" height="14" viewBox="0 0 14 14"><path d="M1 1h12v12H1zM4 3h6v8H4zM5 5h4M5 7h4M5 9h4" fill="none" stroke="#666"/></svg></button>
                <button aria-label="分页预览"><svg width="14" height="14" viewBox="0 0 14 14"><path d="M1 1h12v12H1zM5 1v7h4V1M1 8h8" fill="none" stroke="#666"/></svg></button>
                <span class="minus"></span>
                <input type="range" aria-label="显示比例" min="10" max="190" value="110">
                <span class="plus-sign"></span>
                <span class="zoom">130%</span>
            </footer>
            <div class="banner">主讲：CAD校长</div>
        </aside>
    </div>

    <div class="taskbar">
        <button class="start" aria-label="开始"><svg width="20" height="20" viewBox="0 0 20 20"><path d="M0 3l9-1v8H0zM10 2l10-2v10H10zM0 11h9v8l-9-1zM10 11h10v9l-10-1z" fill="#fff"/></svg></button>
        <div class="search">
            <svg width="26" height="26" viewBox="0 0 26 26"><circle cx="13" cy="13" r="11" fill="none" stroke="#111" stroke-width="3"/></svg>
            <input type="search" aria-label="搜索" placeholder="在这里输入你要搜索的内容">
            <svg width="16" height="20" viewBox="0 0 16 20"><rect x="5" y="1" width="6" height="12" rx="2" fill="none" stroke="#333" stroke-width="1.5"/><path d="M2 9v4c0 4 12 4 12 0V9M8 16v4" fill="none" stroke="#333" stroke-width="1.5"/></svg>
        </div>
        <button class="task view" aria-label="任务视图"><svg width="20" height="20" viewBox="0 0 20 20"><path d="M1 0v3h12V0M1 20v-3h12v3M1 6h12v8H1zM18 0v20" fill="none" stroke="#ddd" stroke-width="1.5"/><path d="M16 6h4v3h-4z" fill="#fff"/></svg></button>
        <button class="task open" aria-label="Excel"><svg width="28" height="28" viewBox="0 0 28 28"><path d="M14 4h13v20H14z" fill="#fff" stroke="#1e7145"/><path d="M16 8h4M16 12h4M16 16h4M16 20h4M21 8h4M21 12h4M21 16h4M21 20h4" stroke="#1e7145" stroke-width="2"/><path d="M0 4l17-3v26L0 24z" fill="#1e7145"/><path d="M5 9l7 10M12 9L5 19" stroke="#fff" stroke-width="2"/></svg></button>
        <button class="task open active" aria-label="AutoCAD"><svg width="30" height="30" viewBox="0 0 30 30"><path d="M0 0h30v30H0z" fill="#f8e4e0"/><path d="M4 26L12 4h6l7 22h-6l-2-6-6 2-2 4zM15 10l-3 8 4-2z" fill="#b8242b"/></svg></button>
        <button class="task open" aria-label="百度网盘"><svg width="30" height="30" viewBox="0 0 30 30"><rect width="30" height="30" rx="5" fill="#fff"/><circle cx="15" cy="10" r="4" fill="none" stroke="#35a7f2" stroke-width="3"/><circle cx="9" cy="18" r="4" fill="none" stroke="#3ec1f5" stroke-width="3"/><circle cx="21" cy="18" r="4" fill="none" stroke="#2f8bf0" stroke-width="3"/><path d="M11 12c2 4 6 4 8 0" fill="none" stroke="#ef4b63" stroke-width="3"/><path d="M10 28h5v2h-5z" fill="#ef4b63"/><path d="M15 28h5v2h-5z" fill="#2f8bf0"/></svg></button>
        <div class="tray">
            <button class="people" aria-label="人脉"><svg width="20" height="20" viewBox="0 0 20 20"><circle cx="13" cy="4" r="3" fill="none" stroke="#fff" stroke-width="1.5"/><circle cx="6" cy="11" r="3" fill="none" stroke="#fff" stroke-width="1.5"/><path d="M9 10c2-4 8-3 9 2M1 19c1-6 9-6 10 0" fill="none" stroke="#fff" stroke-width="1.5"/></svg></button>
            <button aria-label="显示隐藏的图标"><svg width="18" height="12" viewBox="0 0 18 12"><path d="M1 10l8-8 8 8" fill="none" stroke="#fff" stroke-width="1.5"/></svg></button>
            <button class="cloud" aria-label="OneDrive"><svg width="20" height="14" viewBox="0 0 20 14"><path d="M3 6c2-7 12-7 13 0z" fill="#aaa"/><path d="M0 10c0-4 4-5 6-3 3-4 7-3 8 0 7-1 7 6 3 6H4c-2 0-4-1-4-3z" fill="#fff"/></svg></button>
            <button aria-label="网络"><svg width="20" height="20" viewBox="0 0 20 20"><path d="M3 0v6M0 3h6M1 1l4 4M5 1L1 5" stroke="#ddd"/><path d="M3 17C3 9 9 3 18 4M7 18C7 12 12 8 18 8M11 18c0-4 3-6 7-6" fill="none" stroke="#77706c" stroke-width="1.5"/><circle cx="16" cy="17" r="2" fill="#888"/></svg></button>
            <button aria-label="音量"><svg width="22" height="18" viewBox="0 0 22 18"><path d="M1 6h3l4-4v14l-4-4H1zM11 6c2 2 2 4 0 6M14 4c3 3 3 7 0 10" fill="none" stroke="#fff" stroke-width="1.5"/><path d="M17 2c4 4 4 10 0 14" fill="none" stroke="#888"/></svg></button>
            <button aria-label="电源"><svg width="22" height="14" viewBox="0 0 22 14"><path d="M6 3h13v9H6z" fill="#fff" stroke="#fff"/><path d="M20 5h2v4h-2zM0 2h5v4H4v5H1V6H0z" fill="#fff"/></svg></button>
            <button class="clock"><span>15:48</span><span>2020/2/12</span></button>
            <button class="notice" aria-label="通知"><svg width="22" height="20" viewBox="0 0 22 20"><path d="M0 0h20v15H10l-4 4v-4H0z" fill="#fff"/><path d="M3 4h14M3 8h14M3 11h9" stroke="#2a1c15"/></svg><span class="badge">1</span></button>
            <span class="show-desktop"></span>
        </div>
    </div>
</body>
</html>
```

FILE: styles.css
```css
* {
    box-sizing: border-box;
}
body {
    margin: 0;
    height: 100vh;
    display: flex;
    flex-direction: column;
    overflow: hidden;
    font-family: "Noto Sans", "Noto Sans CJK SC", sans-serif;
    font-size: 15px;
    color: #e2e4e7;
}
button {
    margin: 0;
    padding: 0;
    border: none;
    background: none;
    color: inherit;
    font: inherit;
    display: flex;
    align-items: center;
    justify-content: center;
    white-space: nowrap;
}
input, select {
    font: inherit;
    border: none;
    margin: 0;
    min-width: 0;
}
svg {
    display: block;
    flex-shrink: 0;
}
.sprite {
    position: absolute;
    width: 0;
    height: 0;
}
.desktop {
    flex: 1;
    min-height: 0;
    display: grid;
    grid-template-columns: minmax(0, 1fr) 483px;
}

/* little triangles */
.caret {
    width: 0;
    height: 0;
    flex-shrink: 0;
    border: 3px solid transparent;
    border-top: 4px solid #d6d8db;
    border-bottom: none;
}
.caret.wide {
    border-width: 5px;
    border-top-width: 6px;
    border-bottom: none;
}
.caret.tall {
    border-width: 4px;
    border-top-width: 6px;
    border-bottom: none;
}
.caret.up {
    border-width: 5px;
    border-top: none;
    border-bottom: 5px solid #555;
}
.caret.left {
    border: 5px solid transparent;
    border-left: none;
    border-right: 5px solid #d6d8db;
}
.caret.right {
    border: 5px solid transparent;
    border-right: none;
    border-left: 5px solid #666;
}
.caret.dark { border-top-color: #333; }
.caret.faded { border-top-color: #63a07c; }
.caret.up.dark { border-top: none; border-bottom-color: #555; }
.caret.wide.grey-c { border-top-color: #666; }
.caret.left.grey-c { border-right-color: #666; }
.caret.left.pale { border-right-color: #bbb; }
.caret.right.pale { border-left-color: #bbb; }
.caret.lined::before {
    content: "";
    display: block;
    width: 10px;
    height: 2px;
    margin: -9px 0 0 -5px;
    background: #d6d8db;
}
.caret.lined {
    border-width: 5px;
    border-bottom: none;
}

/* AutoCAD window */
.cad {
    display: flex;
    flex-direction: column;
    min-height: 0;
    background: #212831;
    border: solid #3b4453;
    border-width: 0 4px 5px 3px;
}
.cad-head {
    display: flex;
    height: 59px;
}
.app-button {
    width: 48px;
    height: 50px;
    margin-top: 4px;
    gap: 3px;
    background: linear-gradient(#b5b7b9, #747679);
    border: 1px solid #111;
}
.cad-head-rows {
    flex: 1;
    min-width: 0;
}
.title-bar {
    height: 37px;
    display: flex;
    align-items: center;
    padding-bottom: 2px;
}
.quick {
    display: flex;
    align-items: center;
    gap: 8px;
    padding-left: 11px;
}
.quick button {
    width: 22px;
}
.app-title {
    display: flex;
    gap: 16px;
    margin: 0 auto;
    font-size: 16px;
    color: #f0f1f2;
    white-space: nowrap;
}
.account {
    display: flex;
    align-items: center;
    gap: 11px;
}
.login {
    gap: 8px;
}
.login-caret {
    margin-left: 68px;
}
.divider {
    width: 1px;
    height: 22px;
    background: #4c535e;
}
.help {
    width: 20px;
    height: 20px;
    border-radius: 50%;
    background: #eef0f4;
    color: #2452a8;
    font-weight: bold;
}
.win-controls {
    display: flex;
    gap: 15px;
    margin: 0 7px 0 86px;
}
.ribbon-tabs {
    display: flex;
    height: 22px;
    padding-left: 7px;
    color: #b4b8be;
}
.ribbon-tabs button {
    padding: 0 12px 3px;
}
.ribbon-tabs .active {
    background: #3b4453;
    color: #f5f6f7;
}
.ribbon-tabs .ribbon-toggle {
    margin-left: 16px;
    gap: 8px;
}
.ribbon {
    display: flex;
    height: 122px;
    gap: 1px;
}
.panel {
    background: #3b4453;
    display: flex;
    flex-direction: column;
}
.panel-body {
    flex: 1;
    min-height: 0;
    display: flex;
}
.panel h2 {
    margin: 0;
    height: 22px;
    font-size: 15px;
    font-weight: normal;
    display: flex;
    align-items: center;
    justify-content: center;
    gap: 9px;
}
.big {
    flex-direction: column;
    justify-content: flex-start;
    padding-top: 5px;
    line-height: 21px;
    width: 52px;
}
.big svg {
    margin-bottom: 2px;
}
.big .caret {
    margin-top: 4px;
}
.tools {
    display: grid;
    grid-auto-rows: 31px;
    align-items: center;
    justify-items: center;
    padding-top: 3px;
}
.tools.two {
    grid-template-columns: 30px 16px;
}
.tools.five {
    grid-template-columns: 36px 37px 36px 10px 42px;
}
.draw { width: 263px; }
.modify { width: 165px; }
.annotate { width: 157px; }
.layers { width: 314px; }
.blocks { width: 98px; }
.draw .big { width: 50px; }
.draw .big:first-child, .draw .big:nth-child(4) { width: 54px; }
.annotate .big { width: 60px; }
.annotate .big:nth-child(2) { width: 48px; }
.layer-side {
    padding-top: 5px;
}
.layer-combo {
    display: flex;
    align-items: center;
    gap: 8px;
    width: 258px;
    height: 28px;
    padding: 0 2px 0 6px;
    background: #4c576c;
    border: 1px solid #2a313c;
}
.layer-combo select {
    flex: 1;
    appearance: none;
    background: none;
    color: #e2e4e7;
    font-size: 16px;
}
.swatch {
    width: 18px;
    height: 18px;
    margin-left: -5px;
    background: #fff;
    border: 1px solid #000;
}
.layer-tools {
    grid-template-columns: repeat(5, 30px);
    padding-top: 2px;
    margin-left: -2px;
}
.folded {
    width: 73px;
    height: 120px;
    margin: 1px 0 0 2px;
    flex-direction: column;
    justify-content: flex-start;
    padding: 3px 0 5px;
    background: #4c576c;
    line-height: 24px;
}
.folded .caret {
    margin-top: auto;
}

.file-tabs {
    display: flex;
    align-items: flex-end;
    gap: 4px;
    height: 38px;
    padding-left: 25px;
    border-bottom: 5px solid #3b4453;
    color: #b4b8be;
}
.file-tab {
    width: 150px;
    height: 28px;
    justify-content: space-between;
    padding: 0 10px 0 14px;
    border-radius: 14px 14px 0 0;
    background: #2c333e;
}
.file-tab.active {
    background: #3b4453;
    color: #f5f6f7;
}
.new-tab {
    width: 28px;
    height: 24px;
    margin: 0 0 2px 8px;
    border-radius: 8px;
    background: #2c333e;
    font-size: 20px;
}

.canvas {
    position: relative;
    flex: 1;
    min-height: 0;
    overflow: hidden;
    border-bottom: 1px solid #444b57;
}
.drawing {
    position: absolute;
    left: 0;
    top: 0;
}
.drawing path {
    fill: none;
    stroke: #e8e8e8;
}
.drawing text {
    font-family: "Liberation Sans", sans-serif;
    font-size: 58px;
    fill: #fff;
}
.drawing .dim path { stroke: #d8d800; }
.drawing .dim text { fill: #ff0; }
.drawing .solid { fill: #fff; }
.drawing .dim .solid { fill: #ff0; }
.compass circle {
    fill: none;
    stroke: #464b54;
    stroke-width: 14px;
}
.drawing .cube { fill: #c0c1c4; stroke: #8d9094; }
.drawing .cube-face { fill: #adb3ba; stroke: none; }
.drawing .faint { fill: #2b323b; stroke: none; }
.drawing .compass text {
    font-family: "Noto Sans CJK SC", sans-serif;
    font-size: 19px;
    text-anchor: middle;
    fill: #c3c5c8;
}
.drawing .compass .top {
    font-size: 32px;
    font-weight: 300;
    fill: #333;
}
.view-label {
    position: absolute;
    left: 2px;
    top: 4px;
    display: flex;
    font-size: 15px;
}
.doc-controls {
    position: absolute;
    right: 12px;
    top: 11px;
    display: flex;
    gap: 11px;
}
.tip {
    position: absolute;
    left: 862px;
    top: 191px;
    width: 158px;
    height: 26px;
    padding-left: 3px;
    line-height: 23px;
    background: #989898;
    border: 1px solid #000;
    color: #000;
    white-space: nowrap;
}
.ucs {
    position: absolute;
    right: 54px;
    top: 207px;
    width: 69px;
    height: 21px;
    gap: 6px;
    border-radius: 4px;
    background: #b2b4c3;
    color: #62646f;
    font-size: 13px;
}
.nav-bar {
    position: absolute;
    right: 4px;
    top: 259px;
    width: 40px;
    height: 259px;
    padding: 2px 0;
    display: flex;
    flex-direction: column;
    align-items: center;
    justify-content: space-between;
    background: #5a5f63;
    border-radius: 4px;
}
.nav-bar svg {
    fill: none;
    stroke: #454b50;
    stroke-width: 1.5;
}
.nav-bar .caret { border-top-color: #3d4348; }
.nav-x { align-self: flex-end; margin-right: 2px; }
.history {
    position: absolute;
    left: 361px;
    bottom: 37px;
    height: 20px;
    padding: 0 3px;
    border-radius: 3px;
    background: #55585a;
    color: #d0d2d4;
    font-family: "Liberation Mono", "Noto Sans CJK SC", monospace;
    font-size: 16px;
    line-height: 19px;
    white-space: pre;
}
.command {
    position: absolute;
    left: 284px;
    bottom: 0;
    width: 861px;
    height: 33px;
    display: flex;
    align-items: center;
    gap: 10px;
    background: #2d3440;
}
.grip {
    width: 8px;
    height: 22px;
    margin: 0 -4px 0 4px;
    background: radial-gradient(#c9ccd1 1px, transparent 1px) 0 0 / 4px 4px;
}
.command-line {
    flex: 1;
    height: 32px;
    margin-left: -2px;
    padding: 0 6px 0 5px;
    display: flex;
    align-items: center;
    gap: 3px;
    background: #fff;
    border-radius: 2px;
    color: #111;
    font-family: "Liberation Mono", "Noto Sans CJK SC", monospace;
    font-size: 14px;
}
.command-line label {
    padding-left: 4px;
    white-space: nowrap;
}
.command-line label span { font-size: 16px; }
.command-line i { color: #11c; font-style: normal; }
.command-line kbd {
    font: inherit;
    background: #d2d2d2;
    border-radius: 4px;
}
.command-line input {
    flex: 1;
    background: none;
    outline: none;
}

.layout-tabs {
    display: flex;
    gap: 6px;
    height: 27px;
    padding-left: 16px;
    align-items: flex-start;
    color: #aab0b8;
}
.layout-tabs button {
    height: 22px;
    padding: 0 12px;
    border-radius: 0 0 10px 10px;
    background: #2a313c;
}
.layout-tabs .active {
    background: #3b4453;
    color: #fff;
    font-weight: bold;
}
.layout-tabs .plus { font-size: 20px; padding: 0 10px; }
.status {
    display: flex;
    justify-content: flex-end;
    height: 32px;
    padding: 0 3px 2px 0;
    gap: 3px;
    color: #f0f1f2;
    font-size: 14px;
    white-space: nowrap;
}
.cell {
    display: flex;
    align-items: center;
    justify-content: center;
    gap: 10px;
    min-width: 29px;
    padding: 0 5px;
    background: #3b4453;
}
.vars {
    width: 382px;
    margin-right: -2px;
    font-size: 15px;
}
.coords {
    width: 225px;
    justify-content: flex-end;
    padding-right: 7px;
}
.model {
    width: 34px;
    font-size: 15px;
}
.cell.tight { margin-left: -2px; padding: 0 4px; }
.cell.pair { gap: 12px; }
.cell.on { background: #5f8fc4; }
.cell.dim-on { background: #55709a; padding: 0 4px; }
.cell.gpu { padding: 0 4px; }
span.cell.tight { min-width: 18px; }

/* Excel window */
.excel {
    position: relative;
    display: flex;
    flex-direction: column;
    min-height: 0;
    background: #e6e6e6;
    color: #444;
    border-right: 1px solid #999;
    border-bottom: 1px solid #aaa;
}
.xl-head {
    height: 79px;
    background: #217346;
    color: #fff;
}
.xl-title {
    display: grid;
    grid-template-columns: 52px 32px 27px 38px 105px 59px 57px 57px 12px;
    align-items: center;
    justify-items: start;
    height: 40px;
    padding-left: 20px;
}
.xl-name { color: #a3c7b0; font-size: 16px; }
.xl-tabs {
    display: flex;
    height: 32px;
    align-items: center;
}
.xl-tabs button {
    height: 23px;
    width: 41px;
    padding-left: 5px;
    justify-content: flex-start;
    overflow: hidden;
    border-right: 1px solid #c9dfd1;
}
.xl-tabs button > span { width: 33px; overflow: hidden; }
.xl-tabs .file { width: 70px; padding-left: 16px; border: none; }
.xl-tabs .tell {
    width: 89px;
    padding-left: 12px;
    gap: 7px;
    border: none;
    color: #77ae8c;
}
.xl-tabs .user { width: 20px; border: none; }
.xl-tabs .scroll-right {
    width: 16px;
    height: 30px;
    margin-left: auto;
    border: none;
    background: #fff;
}
.xl-tabs .scroll-right .caret { width: 0; overflow: visible; }
.formula-bar {
    display: flex;
    align-items: center;
    height: 58px;
    padding: 0 5px 3px 1px;
    position: relative;
}
.formula-bar > * {
    height: 32px;
    background: #fff;
    border: 1px solid #c6c6c6;
}
.name-box { width: 127px; padding: 0 6px; color: #444; }
.fx {
    width: 137px;
    margin: 0 3px 0 37px;
    display: flex;
    justify-content: space-around;
    color: #aaa;
    font-size: 18px;
}
.formula { flex: 1; padding: 0 13px; font-size: 18px; border-right: none; color: #444; }
.formula-bar > svg {
    width: 25px;
    padding: 0 7px;
    border-left: none;
}
.workbook {
    flex: 1;
    min-height: 0;
    display: flex;
}
.sheet {
    flex: 1;
    min-width: 0;
    overflow: hidden;
    border-right: 1px solid #999;
}
.sheet table {
    width: 100%;
    table-layout: fixed;
    border-collapse: separate;
    border-spacing: 0;
    font-family: "Liberation Serif", "Noto Sans CJK SC", serif;
    color: #000;
}
.c-head { width: 45px; }
.c-a { width: 104px; }
.sheet th {
    padding: 0 0 4px 1px;
    background: #e6e6e6;
    border-right: 1px solid #999;
    border-bottom: 1px solid #aaa;
    vertical-align: bottom;
    text-align: left;
    font-family: "Noto Sans CJK SC", sans-serif;
    font-size: 23px;
    font-weight: 300;
    line-height: 22px;
}
.sheet thead th {
    height: 28px;
    padding: 0;
    border-right: none;
}
.corner {
    float: right;
    margin: 0 3px 3px 0;
    border: 11px solid #b1b1b1;
    border-top-color: transparent;
    border-left-color: transparent;
}
.short th { height: 30px; }
.tall th, .group th { height: 72px; padding-bottom: 14px; }
.tall th { height: 73px; }
.mid th { height: 64px; padding-bottom: 14px; }
.row th { height: 56px; }
.dark-row th { height: 55px; padding-bottom: 9px; }
.sheet td {
    padding: 2px 0 0 5px;
    border-right: 1px solid #d0d0d0;
    border-bottom: 1px solid #d0d0d0;
    background: #fff;
    font-size: 29px;
    font-weight: 500;
    line-height: 32px;
    white-space: nowrap;
}
.sheet td.grey, .sheet td.dark, .sheet .group td {
    padding: 2px 0 0 6px;
    border: none;
    text-align: center;
}
.sheet td.grey { background: #aeaaaa; }
.sheet td.head { font-size: 52px; font-weight: 900; padding-top: 8px; }
.sheet td.sub { font-size: 49px; font-weight: 900; }
.sheet td.dark {
    padding-left: 0;
    background: #757171;
    font-family: "Noto Sans CJK SC", sans-serif;
    font-weight: 300;
}
.sheet .group td { background: #ffc000; font-size: 31px; font-weight: 400; }
.sheet .group td.num { font-size: 40px; padding: 12px 0 0; }
.v-scroll {
    width: 25px;
    padding: 0 3px;
    display: flex;
    flex-direction: column;
}
.v-scroll button, .h-scroll button {
    width: 19px;
    height: 19px;
    background: #fff;
    border: 1px solid #ababab;
}
.thumb {
    background: #fff;
    border: 1px solid #ababab;
}
.v-scroll .thumb {
    height: 21px;
    margin: 321px 0 auto;
}
.v-scroll {
    background: linear-gradient(#dadada, #dadada) center / 19px 100% no-repeat;
}
.sheet-tabs {
    display: flex;
    align-items: center;
    height: 29px;
    padding: 0 25px 0 23px;
    border-top: 1px solid #999;
}
.sheet-tabs > .caret.right { margin-left: 24px; }
.sheet-tab {
    width: 82px;
    height: 26px;
    margin: -4px 0 0 41px;
    padding-bottom: 4px;
    background: #fff;
    border-bottom: 2px solid #217346;
    color: #217346;
    font-size: 17px;
}
.add { margin-left: 33px; }
.dots { margin: 0 12px 0 auto; font-family: "DejaVu Sans", sans-serif; font-size: 18px; }
.h-scroll {
    display: flex;
    width: 154px;
    background: #dadada;
}
.h-scroll .thumb {
    width: 26px;
    margin: 0 9px 0 auto;
}
.xl-status {
    display: flex;
    align-items: center;
    height: 27px;
    padding: 0 0 3px 2px;
    background: #f1f1f1;
    border-top: 1px solid #ccc;
}
.macro { margin: 0 53px 0 21px; }
.xl-status button { width: 41px; height: 26px; }
.xl-status .active { background: #c8c8c8; }
.minus, .plus-sign {
    width: 10px;
    height: 2px;
    margin-left: 5px;
    background: #555;
}
.plus-sign::before {
    content: "";
    display: block;
    width: 2px;
    height: 10px;
    margin: -4px 0 0 4px;
    background: #555;
}
.xl-status input {
    appearance: none;
    width: 125px;
    height: 14px;
    margin-left: 3px;
    background: linear-gradient(#aaa, #aaa) center / 100% 1px no-repeat;
}
.xl-status input::-webkit-slider-thumb {
    appearance: none;
    width: 5px;
    height: 14px;
    background: #666;
}
.zoom { margin-left: 16px; }
.banner {
    position: absolute;
    left: 43px;
    right: 31px;
    top: 103px;
    height: 150px;
    padding-bottom: 6px;
    display: flex;
    align-items: center;
    justify-content: center;
    background: #212830;
    color: #fff;
    font-family: "Liberation Sans", "Noto Sans CJK SC", sans-serif;
    font-size: 37px;
    font-weight: 300;
}

/* Windows taskbar */
.taskbar {
    height: 50px;
    display: flex;
    background: linear-gradient(90deg, #271a14, #2e1e15 70%, #251913);
    color: #fff;
}
.start { width: 60px; }
.search {
    width: 430px;
    display: flex;
    align-items: center;
    padding: 0 18px 0 12px;
    gap: 12px;
    background: #f2f2f2;
}
.search input {
    flex: 1;
    background: none;
    font-size: 19px;
    padding: 0;
}
.search input::placeholder { color: #333; }
.task.view { width: 60px; margin-right: 3px; }
.task.open { border-bottom: 3px solid #76b9ed; padding-top: 3px; width: 52px; margin-left: 5px; }
.task.open.active { background: #564a44; width: 57px; margin: 0 4px 0 6px; }
.tray {
    margin-left: auto;
    display: flex;
    gap: 9px;
    padding-right: 5px;
}
.tray .people { margin-right: 16px; }
.cloud {
    width: 30px;
    margin: 0 -4px;
    background: #33251e;
}
.clock {
    flex-direction: column;
    width: 82px;
    line-height: 22px;
}
.notice {
    position: relative;
    margin-left: 13px;
    width: 22px;
}
.badge {
    position: absolute;
    left: 9px;
    top: 24px;
    width: 20px;
    height: 20px;
    border: 1px solid #999;
    border-radius: 50%;
    background: #2a211d;
    font-weight: bold;
    line-height: 17px;
}
.show-desktop {
    width: 1px;
    margin-left: 13px;
    background: #8a817b;
}
```
